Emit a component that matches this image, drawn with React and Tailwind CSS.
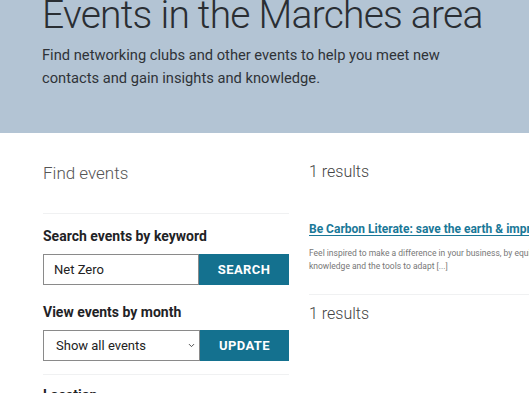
import React from 'react';
import { ChevronDown } from 'lucide-react';

const FONT = { fontFamily: '"Roboto", "Liberation Sans", sans-serif' };

function App() {
  return (
    <div className="h-[393px] w-[529px] overflow-hidden bg-white text-[#2b2f33]" style={FONT}>
      {/* Page header */}
      <div className="flex h-[133px] flex-col bg-[#b3c4d4] pl-[42px]">
        <h1 className="-mt-[9px] text-[39px] font-light leading-[48px] tracking-[-0.75px] text-[#2a2e33] whitespace-nowrap">
          Events in the Marches area
        </h1>
        <p className="mt-[5px] w-[420px] text-[14.7px] leading-[23px] text-[#2f3338]">
          Find networking clubs and other events to help you meet new contacts and gain insights and knowledge.
        </p>
      </div>

      <div className="flex gap-[20px] pl-[43px]">
        {/* Filters */}
        <div className="w-[246px] shrink-0">
          <h2 className="pt-[30px] text-[17px] font-light leading-[20px] text-[#555]">Find events</h2>
          <div className="mt-[30px] h-px bg-[#f0f1f2]" />

          <label className="mt-[14px] block text-[14px] font-bold leading-[16px] text-[#1f2326]">
            Search events by keyword
          </label>
          <div className="mt-[10px] flex h-[31px]">
            <input
              readOnly
              value="Net Zero"
              className="h-full w-[156px] border border-[#8a8a8a] px-[10px] text-[13px] text-[#222] outline-none"
              style={FONT}
            />
            <button className="h-full flex-1 bg-[#14718f] text-[13px] font-bold tracking-[0.4px] text-white">
              SEARCH
            </button>
          </div>

          <label className="mt-[19px] block text-[14px] font-bold leading-[16px] text-[#1f2326]">
            View events by month
          </label>
          <div className="mt-[10px] flex h-[31px]">
            <div className="flex h-full w-[157px] items-center justify-between border border-[#8a8a8a] pl-[12px] pr-[3px] text-[13px] text-[#222]">
              <span>Show all events</span>
              <ChevronDown size={9} strokeWidth={2.5} className="text-[#444]" />
            </div>
            <button className="h-full flex-1 bg-[#14718f] text-[13px] font-bold tracking-[0.4px] text-white">
              UPDATE
            </button>
          </div>
          <div className="mt-[13px] h-px bg-[#f0f1f2]" />
          <div className="mt-[12px] text-[14px] font-bold leading-[16px] text-[#1f2326]">Location</div>
        </div>

        {/* Results */}
        <div className="w-[400px] shrink-0">
          <div className="pt-[30px] text-[16px] font-light leading-[18px] text-[#444]">1 results</div>
          <a
            href="#"
            className="mt-[40px] block whitespace-nowrap text-[12px] font-bold leading-[16px] text-[#1a7898] underline decoration-[#1a7898] underline-offset-2"
          >
            Be Carbon Literate: save the earth &amp; improve your business
          </a>
          <p className="mt-[10px] whitespace-nowrap text-[8.5px] leading-[13px] text-[#777]">
            Feel inspired to make a difference in your business, by equipping yourself with the
            <br />
            knowledge and the tools to adapt [...]
          </p>
          <div className="mt-[21px] h-px bg-[#f0f1f2]" />
          <div className="mt-[10px] text-[16px] font-light leading-[18px] text-[#444]">1 results</div>
        </div>
      </div>
    </div>
  );
}

export default App;
